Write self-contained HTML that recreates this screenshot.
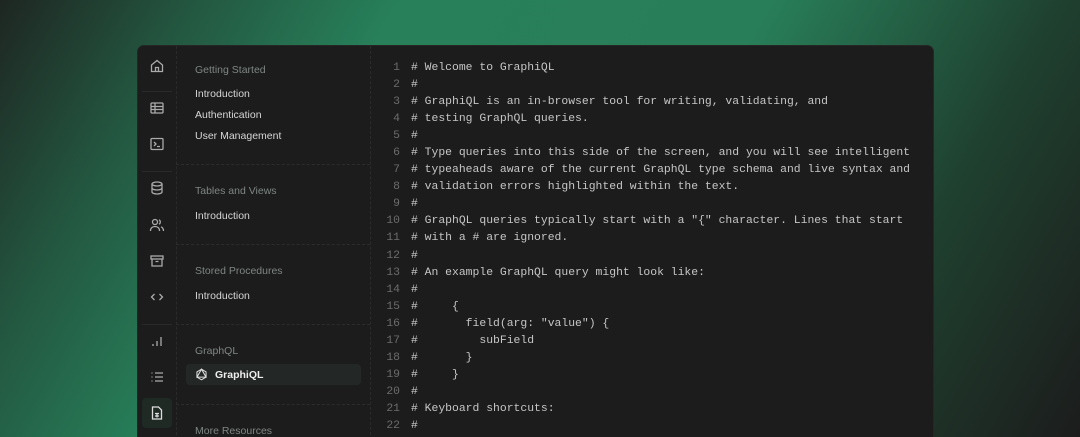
<!DOCTYPE html>
<html><head><style>
html,body{margin:0;padding:0;width:1080px;height:437px;overflow:hidden}
body{position:relative;font-family:"Liberation Sans",sans-serif;
background:linear-gradient(120deg,#1e2622 0%,#23553f 14%,#27805a 30%,#287e59 58%,#1f402f 80%,#1c1c1c 100%);}
.frame{position:absolute;left:137px;top:45px;width:797px;height:400px;background:#1c1c1c;border-radius:7px 7px 0 0;overflow:hidden;border:1px solid #262626;border-bottom:none;box-sizing:border-box}
.icons{position:absolute;left:0;top:0;width:38px;height:100%;border-right:1px dashed #2a2a2a;background:#1c1c1c}
.ic{position:absolute;left:11px;width:16px;height:16px}
.sep{position:absolute;left:4px;width:30px;border-top:1px solid #2a2a2a}
.nav{position:absolute;left:38px;top:0;width:194px;height:100%;border-right:1px dashed #2b2b2b}
.h{position:absolute;left:19px;font-size:10.5px;color:#7e8683}
.i{position:absolute;left:19px;font-size:10.5px;color:#d6d6d6}
.hr{position:absolute;left:0;width:194px;border-top:1px dashed #2c2c2c}
.code{position:absolute;left:231px;top:14px;font-family:"Liberation Mono",monospace;font-size:11.4px;line-height:17.05px;color:#c6c6c6;white-space:pre}
.ln{display:inline-block;width:31px;text-align:right;color:#6c6c6c;margin-right:11px}
</style></head><body>
<div class="frame">
 <div class="icons">
  <svg class="ic" style="top:12px" viewBox="0 0 16 16" fill="none" stroke="#aaa" stroke-width="1.3"><path d="M2.5 7 8 2.5 13.5 7v6.5h-11z"/><path d="M6.5 13.5v-4h3v4"/></svg>
  <div class="sep" style="top:45px"></div>
  <svg class="ic" style="top:54px" viewBox="0 0 16 16" fill="none" stroke="#aaa" stroke-width="1.3"><rect x="2" y="3" width="12" height="10" rx="1"/><path d="M2 6.5h12M2 9.5h12M6 3v10"/></svg>
  <svg class="ic" style="top:90px" viewBox="0 0 16 16" fill="none" stroke="#aaa" stroke-width="1.3"><rect x="2" y="2.5" width="12" height="11" rx="1"/><path d="M5 6l2 2-2 2M8 10.5h3"/></svg>
  <div class="sep" style="top:125px"></div>
  <svg class="ic" style="top:134px" viewBox="0 0 16 16" fill="none" stroke="#aaa" stroke-width="1.3"><ellipse cx="8" cy="4" rx="5" ry="2"/><path d="M3 4v8c0 1.1 2.2 2 5 2s5-.9 5-2V4M3 8c0 1.1 2.2 2 5 2s5-.9 5-2"/></svg>
  <svg class="ic" style="top:171px" viewBox="0 0 16 16" fill="none" stroke="#aaa" stroke-width="1.3"><circle cx="6" cy="5" r="2.5"/><path d="M1.5 14c0-3 2-4.5 4.5-4.5s4.5 1.5 4.5 4.5M10 2.8a2.5 2.5 0 010 4.4M12 9.8c1.5.6 2.5 2 2.5 4.2"/></svg>
  <svg class="ic" style="top:207px" viewBox="0 0 16 16" fill="none" stroke="#aaa" stroke-width="1.3"><rect x="2" y="3" width="12" height="3"/><path d="M3 6v7h10V6M6.5 8.5h3"/></svg>
  <svg class="ic" style="top:243px" viewBox="0 0 16 16" fill="none" stroke="#aaa" stroke-width="1.3"><path d="M5.5 5 2.5 8l3 3M10.5 5l3 3-3 3"/></svg>
  <div class="sep" style="top:278px"></div>
  <svg class="ic" style="top:287px" viewBox="0 0 16 16" fill="none" stroke="#aaa" stroke-width="1.3"><path d="M4 13v-2M8 13V8M12 13V4"/></svg>
  <svg class="ic" style="top:323px" viewBox="0 0 16 16" fill="none" stroke="#aaa" stroke-width="1.3"><path d="M2.5 4h1M2.5 8h1M2.5 12h1M6 4h8M6 8h8M6 12h8"/></svg>
  <div style="position:absolute;left:4px;top:352px;width:30px;height:30px;background:#1f2a25;border-radius:4px"></div>
  <svg class="ic" style="top:359px" viewBox="0 0 16 16" fill="none" stroke="#ddd" stroke-width="1.3"><path d="M3.5 2h6l3 3v9h-9z"/><path d="M6 8.5h4M6 11h4M8 8.5v4"/></svg>
 </div>
 <div class="nav">
  <div class="h" style="top:18px">Getting Started</div>
  <div class="i" style="top:42px">Introduction</div>
  <div class="i" style="top:63px">Authentication</div>
  <div class="i" style="top:84px">User Management</div>
  <div class="hr" style="top:118px"></div>
  <div class="h" style="top:139px">Tables and Views</div>
  <div class="i" style="top:164px">Introduction</div>
  <div class="hr" style="top:198px"></div>
  <div class="h" style="top:219px">Stored Procedures</div>
  <div class="i" style="top:244px">Introduction</div>
  <div class="hr" style="top:278px"></div>
  <div class="h" style="top:299px">GraphQL</div>
  <div style="position:absolute;left:10px;top:318px;width:175px;height:21px;background:#232826;border-radius:4px"></div>
  <svg style="position:absolute;left:19px;top:322px" width="13" height="13" viewBox="0 0 16 16" fill="none" stroke="#ddd" stroke-width="1.3"><path d="M8 1.5 13.6 4.8v6.4L8 14.5 2.4 11.2V4.8z"/><path d="M8 1.5 2.4 11.2h11.2z"/></svg>
  <div class="i" style="left:39px;top:323px;font-weight:bold;color:#eee">GraphiQL</div>
  <div class="hr" style="top:358px"></div>
  <div class="h" style="top:379px">More Resources</div>
 </div>
 <div class="code"><span class="ln">1</span># Welcome to GraphiQL
<span class="ln">2</span>#
<span class="ln">3</span># GraphiQL is an in-browser tool for writing, validating, and
<span class="ln">4</span># testing GraphQL queries.
<span class="ln">5</span>#
<span class="ln">6</span># Type queries into this side of the screen, and you will see intelligent
<span class="ln">7</span># typeaheads aware of the current GraphQL type schema and live syntax and
<span class="ln">8</span># validation errors highlighted within the text.
<span class="ln">9</span>#
<span class="ln">10</span># GraphQL queries typically start with a "{" character. Lines that start
<span class="ln">11</span># with a # are ignored.
<span class="ln">12</span>#
<span class="ln">13</span># An example GraphQL query might look like:
<span class="ln">14</span>#
<span class="ln">15</span>#     {
<span class="ln">16</span>#       field(arg: "value") {
<span class="ln">17</span>#         subField
<span class="ln">18</span>#       }
<span class="ln">19</span>#     }
<span class="ln">20</span>#
<span class="ln">21</span># Keyboard shortcuts:
<span class="ln">22</span>#</div>
</div>
</body></html>
